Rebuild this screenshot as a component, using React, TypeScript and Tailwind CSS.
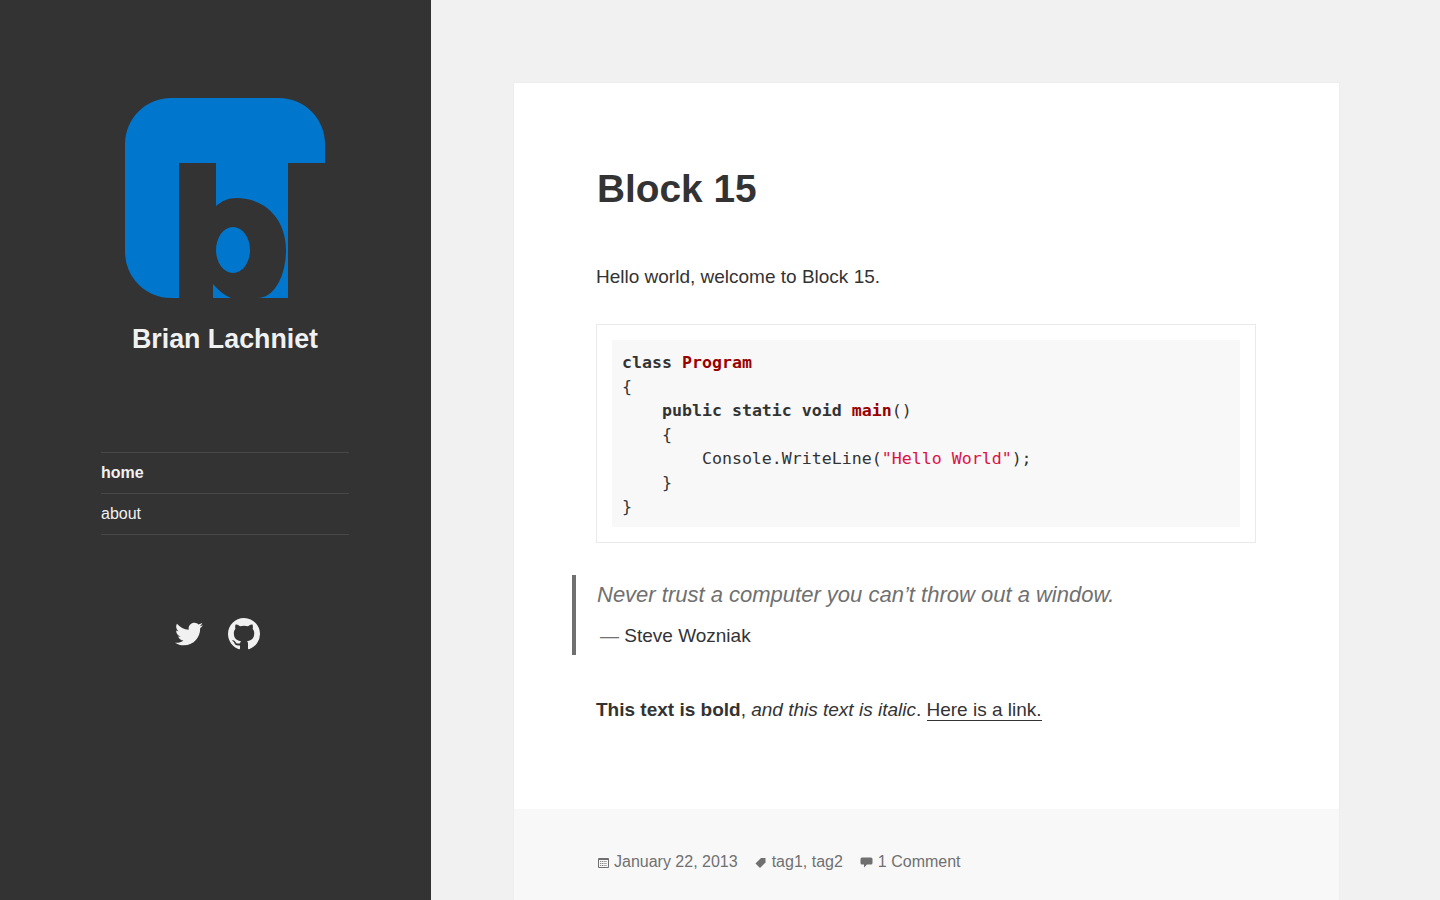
import React from "react";
import { FaTwitter } from "react-icons/fa";

const Logo = () => (
  <svg width="200" height="200" viewBox="125 98 200 200" className="block">
    <path d="M171 98H279A46 46 0 0 1 325 144V163H288V298H171A46 46 0 0 1 125 252V144A46 46 0 0 1 171 98Z" fill="#0077cc" />
    <path d="M179 163H216V206C222 201 228 198 236 198C266 198 286 220 286 250C286 276 274 298 258 298H179Z" fill="#333333" />
    <path d="M213 298V284C218 290 224 295 231 298Z" fill="#0077cc" />
    <ellipse cx="233" cy="250" rx="17" ry="23" fill="#0077cc" />
  </svg>
);

const Github = () => (
  <svg width="32" height="32" viewBox="0 0 16 16" fill="#f1f1f1">
    <path d="M8 0C3.58 0 0 3.58 0 8c0 3.54 2.29 6.53 5.47 7.59.4.07.55-.17.55-.38 0-.19-.01-.82-.01-1.49-2.01.37-2.53-.49-2.69-.94-.09-.23-.48-.94-.82-1.13-.28-.15-.68-.52-.01-.53.63-.01 1.08.58 1.23.82.72 1.21 1.87.87 2.33.66.07-.52.28-.87.51-1.07-1.78-.2-3.64-.89-3.64-3.95 0-.87.31-1.59.82-2.15-.08-.2-.36-1.02.08-2.12 0 0 .67-.21 2.2.82.64-.18 1.32-.27 2-.27.68 0 1.36.09 2 .27 1.53-1.04 2.2-.82 2.2-.82.44 1.1.16 1.92.08 2.12.51.56.82 1.27.82 2.15 0 3.07-1.87 3.75-3.65 3.95.29.25.54.73.54 1.48 0 1.07-.01 1.93-.01 2.2 0 .21.15.46.55.38A8.013 8.013 0 0016 8c0-4.42-3.58-8-8-8z" />
  </svg>
);

const Calendar = () => (
  <svg width="11" height="11" viewBox="0 0 11 11" className="shrink-0">
    <path d="M0.5 1.5h10v9h-10z" fill="none" stroke="#707070" />
    <path d="M1 1h9v2H1z" fill="#707070" />
    <path d="M2 4.5h7M2 6.5h7M2 8.5h7" stroke="#8a8a8a" strokeWidth="1" strokeDasharray="1.2 0.6" />
  </svg>
);

const Tag = () => (
  <svg width="11" height="11" viewBox="0 0 11 11" className="shrink-0">
    <path d="M6 1h4.500v4.500L5 11 0.500 6.500Z" fill="#707070" />
  </svg>
);

const Comment = () => (
  <svg width="13" height="11" viewBox="0 0 13 11" className="shrink-0">
    <path d="M2 0.500h9a1.500 1.500 0 0 1 1.500 1.500v4a1.500 1.500 0 0 1-1.500 1.500H7L4 10.500V7.500H2A1.500 1.500 0 0 1 0.500 6V2A1.500 1.500 0 0 1 2 0.500Z" fill="#707070" />
  </svg>
);

export default function App() {
  return (
    <div className="flex h-screen overflow-hidden bg-[#f1f1f1] font-['Liberation_Sans',Arial,sans-serif] text-[#333333]">
      <aside className="w-[431px] shrink-0 bg-[#333333] pt-[98px] pl-[101px]">
        <div className="flex w-[248px] flex-col items-center">
          <Logo />
          <h2 className="mt-[25px] w-[248px] text-center text-[26.8px] leading-[32px] font-bold text-[#f1f1f1]">Brian Lachniet</h2>
        </div>
        <nav className="mt-[97px] w-[248px] border-t border-[#484848]">
          <a className="flex h-[41px] items-center border-b border-[#484848] text-[16px] font-bold text-[#f1f1f1]">home</a>
          <a className="flex h-[41px] items-center border-b border-[#484848] text-[16px] text-[#f1f1f1]">about</a>
        </nav>
        <div className="mt-[83px] flex w-[248px] items-center justify-center gap-[25px] pr-[15px] text-[#f1f1f1]">
          <FaTwitter size={28} />
          <Github />
        </div>
      </aside>
      <main className="flex-1 pl-[82px] pr-[100px] pt-[82px]">
        <article className="border border-[#ededed] bg-white">
          <div className="pl-[81px] pr-[83px] pt-[82px] pb-[84px]">
            <div className="pl-px">
              <h1 className="pl-px text-[38.8px] leading-[48px] font-bold text-[#333333]">Block 15</h1>
              <p className="mt-[49px] text-[19px] leading-[30px] text-[#333333]">Hello world, welcome to Block 15.</p>
            </div>
            <div className="ml-px mt-[32px] border border-[#eaeaea] p-[15px]">
              <pre className="bg-[#f8f8f8] px-[10px] pt-[11px] pb-[8px] font-['DejaVu_Sans_Mono',monospace] text-[16.6px] leading-[24px] text-[#333333]">
                <span className="font-bold">class</span> <span className="font-bold text-[#990000]">Program</span>{"\n{\n    "}<span className="font-bold">public static void</span> <span className="font-bold text-[#990000]">main</span>{"()\n    {\n        Console.WriteLine("}<span className="text-[#dd1144]">"Hello World"</span>{");\n    }\n}"}
              </pre>
            </div>
            <blockquote className="mt-[32px] -ml-[23px] h-[80px] border-l-4 border-[#707070] pl-[21px]">
              <p className="pt-[5px] text-[22px] leading-[30px] italic text-[#707070]">Never trust a computer you can’t throw out a window.</p>
              <p className="mt-[11px] pl-[3px] text-[19px] leading-[30px] text-[#333333]"><span className="text-[#707070]">— </span>Steve Wozniak</p>
            </blockquote>
            <p className="ml-px mt-[40px] text-[19px] leading-[30px] text-[#333333]">
              <strong className="font-bold">This text is bold</strong>, <em className="italic">and this text is italic</em>. <a className="border-b border-[#333333]">Here is a link.</a>
            </p>
          </div>
          <footer className="flex h-[120px] items-start gap-[17px] bg-[#f8f8f8] pl-[84px] pt-[41px] text-[16px] leading-[24px] text-[#707070]">
            <span className="flex items-center gap-[5px]"><Calendar />January 22, 2013</span>
            <span className="flex items-center gap-[6px]"><Tag />tag1, tag2</span>
            <span className="flex items-center gap-[5px]"><Comment />1 Comment</span>
          </footer>
        </article>
      </main>
    </div>
  );
}
